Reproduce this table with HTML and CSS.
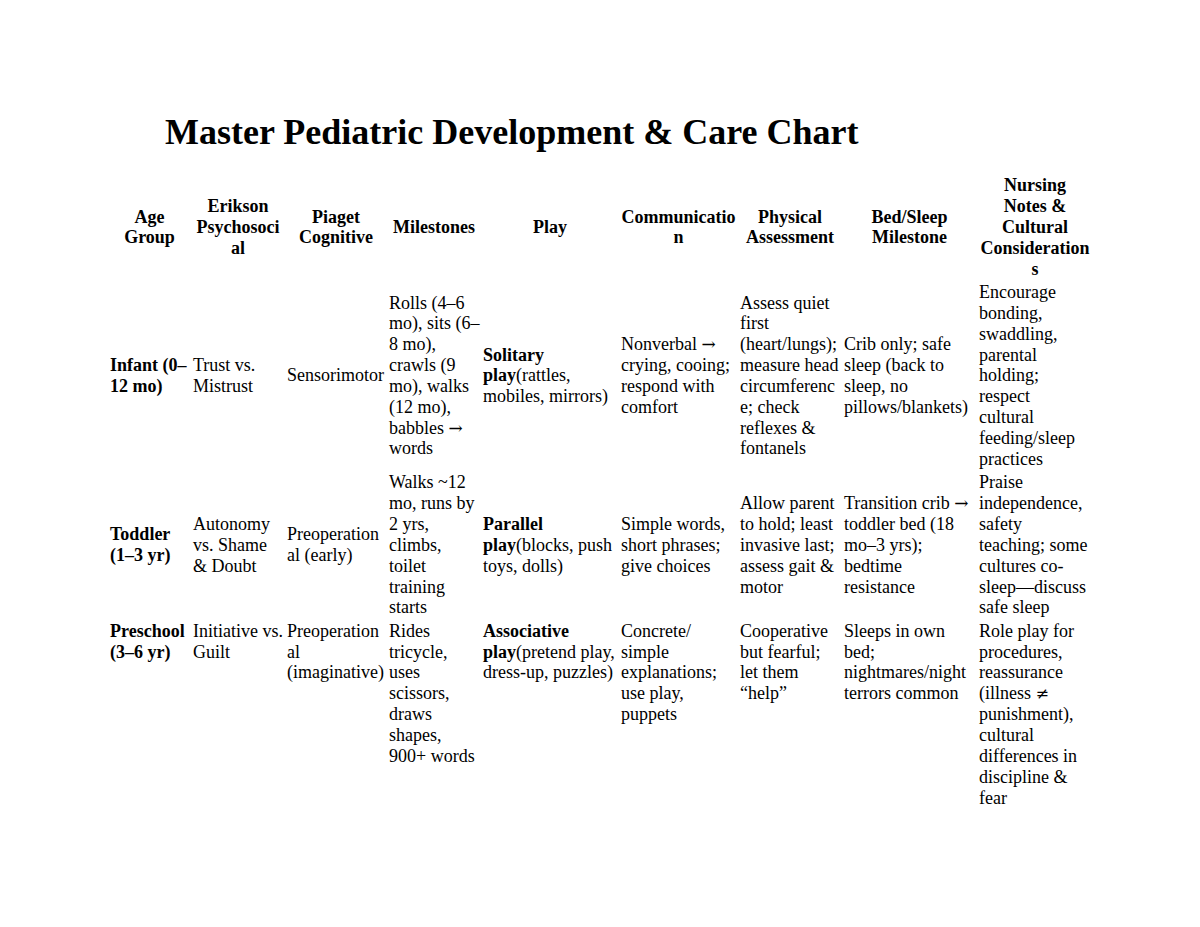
FILE: index.html
```html
<!DOCTYPE html>
<html lang="en">
<head>
<meta charset="utf-8">
<title>Master Pediatric Development &amp; Care Chart</title>
<link rel="stylesheet" href="styles.css">
</head>
<body>
<div class="page">
  <h1 class="title">Master Pediatric Development &amp; Care Chart</h1>
  <table class="chart">
    <colgroup>
      <col class="c-age">
      <col class="c-erik">
      <col class="c-piaget">
      <col class="c-mile">
      <col class="c-play">
      <col class="c-comm">
      <col class="c-phys">
      <col class="c-bed">
      <col class="c-nurse">
    </colgroup>
    <thead>
      <tr>
        <th>Age<br>Group</th>
        <th>Erikson<br>Psychosoci<br>al</th>
        <th>Piaget<br>Cognitive</th>
        <th>Milestones</th>
        <th>Play</th>
        <th>Communicatio<br>n</th>
        <th>Physical<br>Assessment</th>
        <th>Bed/Sleep<br>Milestone</th>
        <th>Nursing<br>Notes &amp;<br>Cultural<br>Consideration<br>s</th>
      </tr>
    </thead>
    <tbody>
      <tr class="mid">
        <td><b>Infant (0–<br>12 mo)</b></td>
        <td>Trust vs.<br>Mistrust</td>
        <td>Sensorimotor</td>
        <td>Rolls (4–6<br>mo), sits (6–<br>8 mo),<br>crawls (9<br>mo), walks<br>(12 mo),<br>babbles <span class="arrow">→</span><br>words</td>
        <td><b>Solitary<br>play</b>(rattles,<br>mobiles, mirrors)</td>
        <td>Nonverbal <span class="arrow">→</span><br>crying, cooing;<br>respond with<br>comfort</td>
        <td>Assess quiet<br>first<br>(heart/lungs);<br>measure head<br>circumferenc<br>e; check<br>reflexes &amp;<br>fontanels</td>
        <td>Crib only; safe<br>sleep (back to<br>sleep, no<br>pillows/blankets)</td>
        <td>Encourage<br>bonding,<br>swaddling,<br>parental<br>holding;<br>respect<br>cultural<br>feeding/sleep<br>practices</td>
      </tr>
      <tr class="mid">
        <td><b>Toddler<br>(1–3 yr)</b></td>
        <td>Autonomy<br>vs. Shame<br>&amp; Doubt</td>
        <td>Preoperation<br>al (early)</td>
        <td>Walks ~12<br>mo, runs by<br>2 yrs,<br>climbs,<br>toilet<br>training<br>starts</td>
        <td><b>Parallel<br>play</b>(blocks, push<br>toys, dolls)</td>
        <td>Simple words,<br>short phrases;<br>give choices</td>
        <td>Allow parent<br>to hold; least<br>invasive last;<br>assess gait &amp;<br>motor</td>
        <td>Transition crib <span class="arrow">→</span><br>toddler bed (18<br>mo–3 yrs);<br>bedtime<br>resistance</td>
        <td>Praise<br>independence,<br>safety<br>teaching; some<br>cultures co-<br>sleep—discuss<br>safe sleep</td>
      </tr>
      <tr class="top">
        <td><b>Preschool<br>(3–6 yr)</b></td>
        <td>Initiative vs.<br>Guilt</td>
        <td>Preoperation<br>al<br>(imaginative)</td>
        <td>Rides<br>tricycle,<br>uses<br>scissors,<br>draws<br>shapes,<br>900+ words</td>
        <td><b>Associative<br>play</b>(pretend play,<br>dress-up, puzzles)</td>
        <td>Concrete/<br>simple<br>explanations;<br>use play,<br>puppets</td>
        <td>Cooperative<br>but fearful;<br>let them<br>“help”</td>
        <td>Sleeps in own<br>bed;<br>nightmares/night<br>terrors common</td>
        <td>Role play for<br>procedures,<br>reassurance<br>(illness <span class="sym">≠</span><br>punishment),<br>cultural<br>differences in<br>discipline &amp;<br>fear</td>
      </tr>
    </tbody>
  </table>
</div>
</body>
</html>
```

FILE: styles.css
```css
html, body {
  margin: 0;
  padding: 0;
  background: #ffffff;
}

body {
  font-family: "Liberation Serif", "Times New Roman", serif;
  color: #000000;
  width: 1200px;
  height: 927px;
  overflow: hidden;
}

.page {
  padding: 112px 0 0 108px;
}

.title {
  margin: 0 0 21px 57px;
  font-size: 36px;
  line-height: 41px;
  font-weight: bold;
  white-space: nowrap;
}

.chart {
  border-collapse: collapse;
  table-layout: fixed;
  width: 985px;
  font-size: 18px;
  line-height: 20.85px;
}

.c-age { width: 83px; }
.c-erik { width: 94px; }
.c-piaget { width: 102px; }
.c-mile { width: 94px; }
.c-play { width: 138px; }
.c-comm { width: 119px; }
.c-phys { width: 104px; }
.c-bed { width: 135px; }
.c-nurse { width: 116px; }

.chart th,
.chart td {
  padding: 1.3px 2px;
  white-space: nowrap;
  overflow: visible;
}

.chart th {
  font-weight: bold;
  text-align: center;
  vertical-align: middle;
}

.chart td {
  text-align: left;
  font-weight: normal;
}

.chart tr.mid td {
  vertical-align: middle;
}

.chart tr.top td {
  vertical-align: top;
}

.arrow {
  font-family: "DejaVu Serif", "DejaVu Sans", serif;
  font-size: 17px;
  line-height: 1;
}

.sym {
  font-family: "DejaVu Serif", serif;
  font-size: 16px;
  line-height: 1;
}
```
